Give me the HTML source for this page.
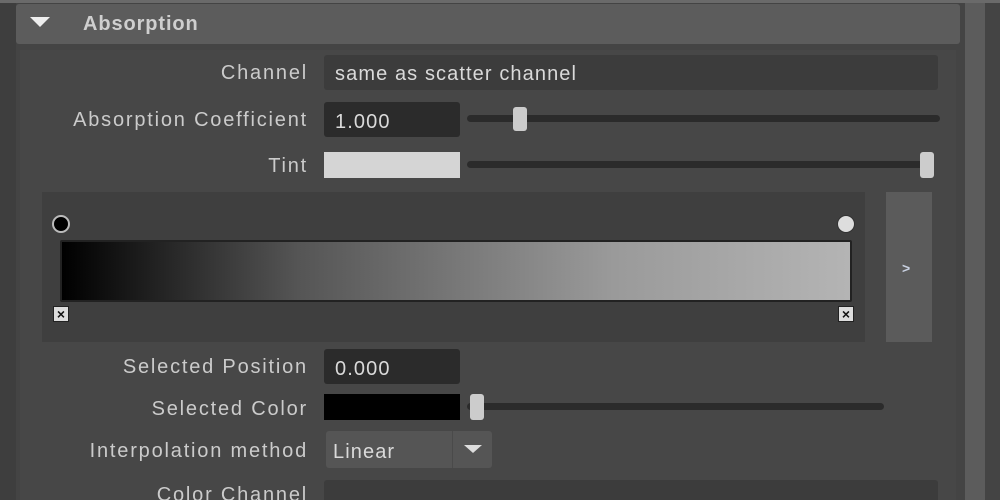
<!DOCTYPE html>
<html><head><style>
html,body{margin:0;width:1000px;height:500px;overflow:hidden}
body{background:#444;font-family:"Liberation Sans",sans-serif;position:relative}
.a{position:absolute}
.lbl{position:absolute;right:692px;color:#cbcbcb;font-size:20px;letter-spacing:1.8px;white-space:nowrap}
.txt{color:#dadada;font-size:20px;letter-spacing:1.1px;position:absolute}
</style></head><body>
<div class="a" style="left:0;top:0;width:1000px;height:3px;background:#6a6a6a"></div>
<div class="a" style="left:0;top:3px;width:16px;height:497px;background:#3e3e3e"></div>
<div class="a" style="left:16px;top:4px;width:944px;height:40px;background:#5c5c5c;border-radius:3px"></div>
<svg class="a" style="left:28px;top:15px" width="24" height="14"><polygon points="2,2 22,2 12,12" fill="#eee"/></svg>
<div class="a" style="left:83px;top:13px;color:#cfcfcf;font-size:20px;letter-spacing:0.9px;font-weight:bold">Absorption</div>
<div class="a" style="left:20px;top:50px;width:936px;height:450px;background:#474747"></div>
<div class="a" style="left:965px;top:3px;width:20px;height:497px;background:#5c5c5c"></div>
<div class="a" style="left:985px;top:3px;width:15px;height:497px;background:#444"></div>

<div class="lbl" style="top:62px">Channel</div>
<div class="a" style="left:324px;top:55px;width:614px;height:35px;background:#3c3c3c;border-radius:3px"></div>
<div class="txt" style="left:335px;top:63px">same as scatter channel</div>

<div class="lbl" style="top:109px">Absorption Coefficient</div>
<div class="a" style="left:324px;top:102px;width:136px;height:35px;background:#2b2b2b;border-radius:3px"></div>
<div class="txt" style="left:335px;top:111px">1.000</div>
<div class="a" style="left:467px;top:115px;width:473px;height:7px;background:#2b2b2b;border-radius:4px"></div>
<div class="a" style="left:513px;top:107px;width:14px;height:24px;background:#ccc;border-radius:3px"></div>

<div class="lbl" style="top:155px">Tint</div>
<div class="a" style="left:324px;top:152px;width:136px;height:26px;background:#d5d5d5"></div>
<div class="a" style="left:467px;top:161px;width:465px;height:7px;background:#2b2b2b;border-radius:4px"></div>
<div class="a" style="left:920px;top:152px;width:14px;height:26px;background:#ccc;border-radius:3px"></div>

<div class="a" style="left:42px;top:192px;width:823px;height:150px;background:#3f3f3f"></div>
<div class="a" style="left:60px;top:240px;width:788px;height:58px;border:2px solid #222;border-radius:2px;background:linear-gradient(to right,#000,#555 30%,#9a9a9a 70%,#b4b4b4)"></div>
<div class="a" style="left:52px;top:215px;width:18px;height:18px;border-radius:50%;background:#000;border:2px solid #bbb;box-sizing:border-box"></div>
<div class="a" style="left:837px;top:215px;width:18px;height:18px;border-radius:50%;background:#ddd;border:1px solid #333;box-sizing:border-box"></div>
<div class="a" style="left:53px;top:306px;width:16px;height:16px;background:#ddd;border:1px solid #222;box-sizing:border-box;color:#111;font-size:14px;line-height:14px;text-align:center;font-weight:bold">×</div>
<div class="a" style="left:838px;top:306px;width:16px;height:16px;background:#ddd;border:1px solid #222;box-sizing:border-box;color:#111;font-size:14px;line-height:14px;text-align:center;font-weight:bold">×</div>
<div class="a" style="left:886px;top:192px;width:46px;height:150px;background:#5b5b5b"></div>
<div class="a" style="left:902px;top:260px;color:#c8d0e0;font-size:14px;font-weight:bold">&gt;</div>

<div class="lbl" style="top:356px">Selected Position</div>
<div class="a" style="left:324px;top:349px;width:136px;height:35px;background:#2b2b2b;border-radius:3px"></div>
<div class="txt" style="left:335px;top:358px">0.000</div>

<div class="lbl" style="top:398px">Selected Color</div>
<div class="a" style="left:324px;top:394px;width:136px;height:26px;background:#000"></div>
<div class="a" style="left:467px;top:403px;width:417px;height:7px;background:#2b2b2b;border-radius:4px"></div>
<div class="a" style="left:470px;top:394px;width:14px;height:26px;background:#ccc;border-radius:3px"></div>

<div class="lbl" style="top:440px">Interpolation method</div>
<div class="a" style="left:326px;top:431px;width:166px;height:37px;background:#555;border-radius:3px"></div>
<div class="a" style="left:452px;top:431px;width:1px;height:37px;background:#4a4a4a"></div>
<div class="txt" style="left:333px;top:441px">Linear</div>
<svg class="a" style="left:462px;top:443px" width="22" height="12"><polygon points="2,2 20,2 11,10" fill="#ddd"/></svg>

<div class="lbl" style="top:484px">Color Channel</div>
<div class="a" style="left:324px;top:480px;width:614px;height:20px;background:#3c3c3c;border-radius:3px 3px 0 0"></div>
</body></html>
